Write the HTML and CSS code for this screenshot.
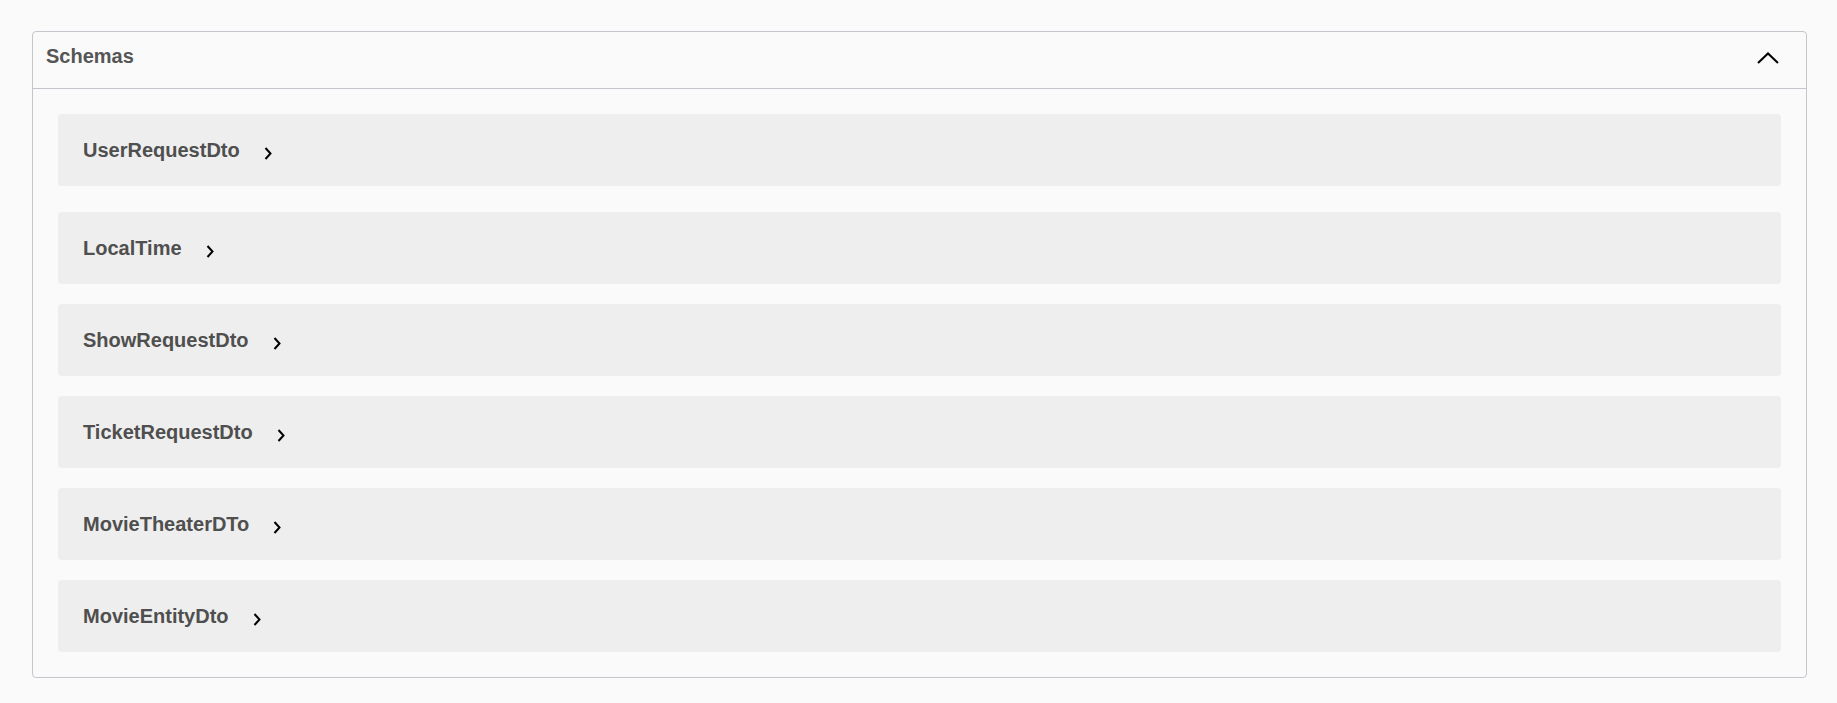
FILE: index.html
```html
<!DOCTYPE html>
<html lang="en">
<head>
<meta charset="utf-8">
<title>Schemas</title>
<link rel="stylesheet" href="styles.css">
</head>
<body>
<section class="models">
  <header class="models-head">
    <h4 class="models-title">Schemas</h4>
    <svg class="collapse-icon" width="22" height="12" viewBox="0 0 22 12"><polyline points="1,11 11,1.5 21,11" fill="none" stroke="#000" stroke-width="2"/></svg>
  </header>
  <div class="models-body">
    <div class="model first"><span class="model-title">UserRequestDto</span><svg class="arrow" width="8" height="13" viewBox="0 0 8 13"><polyline points="1.5,1 6.5,6.5 1.5,12" fill="none" stroke="#000" stroke-width="2"/></svg></div>
    <div class="model"><span class="model-title">LocalTime</span><svg class="arrow" width="8" height="13" viewBox="0 0 8 13"><polyline points="1.5,1 6.5,6.5 1.5,12" fill="none" stroke="#000" stroke-width="2"/></svg></div>
    <div class="model"><span class="model-title">ShowRequestDto</span><svg class="arrow" width="8" height="13" viewBox="0 0 8 13"><polyline points="1.5,1 6.5,6.5 1.5,12" fill="none" stroke="#000" stroke-width="2"/></svg></div>
    <div class="model"><span class="model-title">TicketRequestDto</span><svg class="arrow" width="8" height="13" viewBox="0 0 8 13"><polyline points="1.5,1 6.5,6.5 1.5,12" fill="none" stroke="#000" stroke-width="2"/></svg></div>
    <div class="model"><span class="model-title">MovieTheaterDTo</span><svg class="arrow" width="8" height="13" viewBox="0 0 8 13"><polyline points="1.5,1 6.5,6.5 1.5,12" fill="none" stroke="#000" stroke-width="2"/></svg></div>
    <div class="model"><span class="model-title">MovieEntityDto</span><svg class="arrow" width="8" height="13" viewBox="0 0 8 13"><polyline points="1.5,1 6.5,6.5 1.5,12" fill="none" stroke="#000" stroke-width="2"/></svg></div>
  </div>
</section>
</body>
</html>
```
FILE: styles.css
```css
html, body {
  margin: 0;
  padding: 0;
  background: #fafafa;
}
body {
  padding: 31px 30px 0 32px;
  font-family: "Liberation Sans", Arial, sans-serif;
}
.models {
  border: 1px solid #c4c6cb;
  border-radius: 4px;
  background: #fafafa;
}
.models-head {
  display: flex;
  align-items: center;
  justify-content: space-between;
  height: 56px;
  border-bottom: 1px solid #c4c6cb;
  padding: 0 27px 0 13px;
}
.models-title {
  margin: 0 0 8px 0;
  font-size: 20px;
  line-height: 23px;
  font-weight: bold;
  color: #555555;
}
.collapse-icon {
  display: block;
  margin-top: -5px;
}
.models-body {
  padding: 25px 25px 25px 25px;
  display: flex;
  flex-direction: column;
  gap: 20px;
}
.model {
  display: flex;
  align-items: center;
  height: 72px;
  padding: 0 25px;
  background: #eeeeee;
  border-radius: 4px;
}
.model.first {
  margin-bottom: 6px;
}
.model-title {
  font-size: 20px;
  line-height: 23px;
  font-weight: bold;
  color: #4f4f4f;
}
.arrow {
  display: block;
  margin-left: 24px;
  margin-top: 6px;
}
```
